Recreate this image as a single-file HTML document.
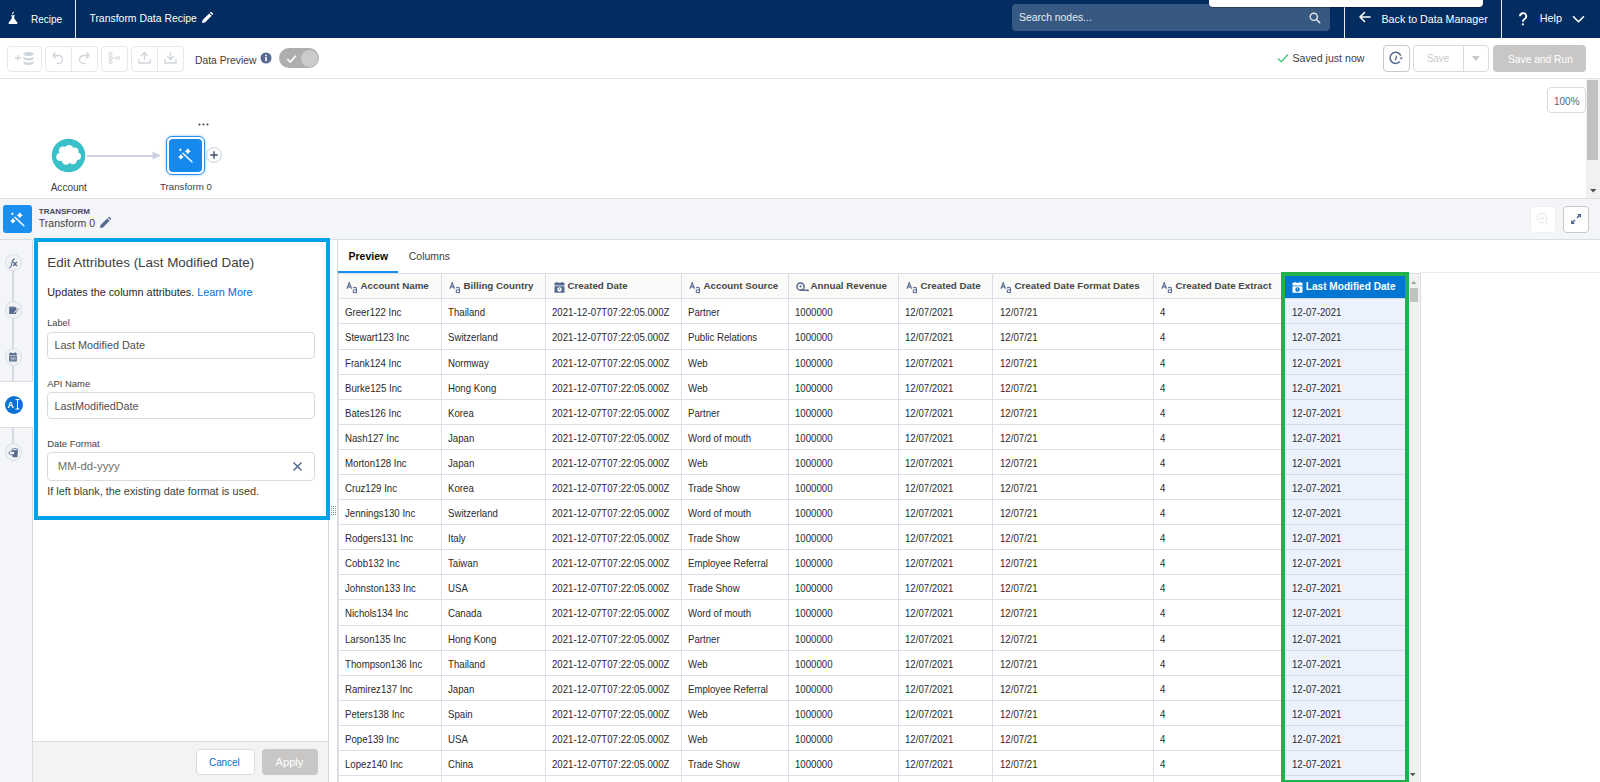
<!DOCTYPE html>
<html><head><meta charset="utf-8"><style>
html,body{margin:0;padding:0;width:1600px;height:782px;overflow:hidden;background:#fff;position:relative}
.t{position:absolute;line-height:1;white-space:pre;font-family:"Liberation Sans", sans-serif}
.b{position:absolute;box-sizing:border-box}
svg.b{overflow:visible}
</style></head><body>
<div class="b" style="left:0px;top:0px;width:1600px;height:38px;background:#032d60"></div>
<svg class="b" style="left:8px;top:11px;" width="10" height="13" viewBox="0 0 10 13"><path d="M3.2 4.2h3.6v0.9h-0.5v2.3l3.1 4.3c0.4 0.6 0 1.2-0.7 1.2H1.3c-0.7 0-1.1-0.6-0.7-1.2l3.1-4.3V5.1h-0.5z" fill="#fff"/><path d="M4.3 2.8l1.8-2.2" stroke="#fff" stroke-width="0.7"/><rect x="4" y="1.8" width="1.3" height="1.3" fill="#fff"/></svg>
<div class="t" style="left:30.5px;top:13.63px;font-size:10.6px;color:#fff;font-weight:400;transform:scaleX(0.9450);transform-origin:0 0;">Recipe</div>
<div class="b" style="left:75px;top:0px;width:1px;height:38px;background:#e8ecf2"></div>
<div class="t" style="left:89.4px;top:13.65px;font-size:10.45px;color:#fff;font-weight:400;">Transform Data Recipe</div>
<svg class="b" style="left:201px;top:12px;" width="12" height="12" viewBox="0 0 12 12"><path d="M1 11l0.6-3 6.6-6.6 2.4 2.4-6.6 6.6z" fill="#fff"/><path d="M8.9 0.7l0.6-0.6c0.3-0.3 0.7-0.3 1 0l1.4 1.4c0.3 0.3 0.3 0.7 0 1l-0.6 0.6z" fill="#fff"/></svg>
<div class="b" style="left:1012px;top:4px;width:318px;height:27px;background:#375881;border-radius:4px"></div>
<div class="t" style="left:1019px;top:13.00px;font-size:10.4px;color:#e8edf4;font-weight:400;">Search nodes...</div>
<svg class="b" style="left:1308.5px;top:11.5px;" width="12" height="12" viewBox="0 0 12 12"><circle cx="4.8" cy="4.8" r="3.6" fill="none" stroke="#e6e6e6" stroke-width="1.4"/><path d="M7.5 7.5l3.2 3.2" stroke="#e6e6e6" stroke-width="1.6" stroke-linecap="round"/></svg>
<div class="b" style="left:1344px;top:0px;width:1px;height:38px;background:#e8ecf2"></div>
<svg class="b" style="left:1358px;top:11px;" width="13" height="12" viewBox="0 0 13 12"><path d="M12 6H2M6.5 1.5L2 6l4.5 4.5" fill="none" stroke="#fff" stroke-width="1.6" stroke-linecap="round" stroke-linejoin="round"/></svg>
<div class="t" style="left:1381.5px;top:14.16px;font-size:10.68px;color:#fff;font-weight:400;">Back to Data Manager</div>
<div class="b" style="left:1209px;top:-4px;width:274px;height:11px;background:#fff;border-radius:0 0 4px 4px;box-shadow:0 1px 1px rgba(0,0,0,0.3)"></div>
<div class="b" style="left:1501px;top:0px;width:1px;height:38px;background:#e8ecf2"></div>
<svg class="b" style="left:1518px;top:12px;" width="10" height="14" viewBox="0 0 10 14"><path d="M2 4.3a3.1 3.1 0 1 1 4.6 2.7c-1.3 0.8-1.7 1.4-1.7 2.8" fill="none" stroke="#fff" stroke-width="1.9"/><circle cx="4.9" cy="12.3" r="1.15" fill="#fff"/></svg>
<div class="t" style="left:1539.8px;top:12.66px;font-size:10.8px;color:#fff;font-weight:400;">Help</div>
<svg class="b" style="left:1572px;top:15px;" width="13" height="9" viewBox="0 0 13 9"><path d="M1.5 1.8l5 5 5-5" fill="none" stroke="#fff" stroke-width="1.6" stroke-linecap="round" stroke-linejoin="round"/></svg>
<div class="b" style="left:0px;top:78px;width:1600px;height:1px;background:#e5e5e5"></div>
<div class="b" style="left:7px;top:45.5px;width:35px;height:26px;border:1px solid #e8e8e8;border-radius:4px;box-sizing:border-box;background:#fff"></div>
<svg class="b" style="left:14px;top:51px;" width="22" height="14" viewBox="0 0 22 14"><path d="M1 7h6M4 4v6" stroke="#cfd3da" stroke-width="1.3"/><ellipse cx="14.5" cy="3" rx="5" ry="2" fill="#cfd3da"/><path d="M9.5 5.2c0 1.1 2.2 2 5 2s5-0.9 5-2v2.3c0 1.1-2.2 2-5 2s-5-0.9-5-2z" fill="#cfd3da"/><path d="M9.5 9.7c0 1.1 2.2 2 5 2s5-0.9 5-2V12c0 1.1-2.2 2-5 2s-5-0.9-5-2z" fill="#cfd3da"/></svg>
<div class="b" style="left:45px;top:45.5px;width:53px;height:26px;border:1px solid #e8e8e8;border-radius:4px;box-sizing:border-box;background:#fff"></div>
<div class="b" style="left:71px;top:45.5px;width:1px;height:26px;background:#e8e8e8"></div>
<svg class="b" style="left:52px;top:51px;" width="12" height="13" viewBox="0 0 12 13"><path d="M3.5 1.5L1 4.5l3 2.8" fill="none" stroke="#cfd3da" stroke-width="1.3" stroke-linejoin="round"/><path d="M1.5 4.5h5a4 4 0 0 1 0 8h-2" fill="none" stroke="#cfd3da" stroke-width="1.3"/></svg>
<svg class="b" style="left:78px;top:51px;" width="12" height="13" viewBox="0 0 12 13"><path d="M8.5 1.5L11 4.5l-3 2.8" fill="none" stroke="#cfd3da" stroke-width="1.3" stroke-linejoin="round"/><path d="M10.5 4.5h-5a4 4 0 0 0 0 8h2" fill="none" stroke="#cfd3da" stroke-width="1.3"/></svg>
<div class="b" style="left:101px;top:45.5px;width:27px;height:26px;border:1px solid #e8e8e8;border-radius:4px;box-sizing:border-box;background:#fff"></div>
<svg class="b" style="left:108px;top:52px;" width="13" height="12" viewBox="0 0 13 12"><rect x="1" y="0.5" width="3" height="2.6" rx="0.8" fill="none" stroke="#cfd3da" stroke-width="1"/><rect x="1" y="4.7" width="3" height="2.6" rx="0.8" fill="none" stroke="#cfd3da" stroke-width="1"/><rect x="1" y="8.9" width="3" height="2.6" rx="0.8" fill="none" stroke="#cfd3da" stroke-width="1"/><path d="M4 6h4.5" stroke="#cfd3da" stroke-width="1"/><rect x="8.5" y="4.7" width="3" height="2.6" rx="0.8" fill="none" stroke="#cfd3da" stroke-width="1"/></svg>
<div class="b" style="left:131px;top:45.5px;width:53px;height:26px;border:1px solid #e8e8e8;border-radius:4px;box-sizing:border-box;background:#fff"></div>
<div class="b" style="left:157px;top:45.5px;width:1px;height:26px;background:#e8e8e8"></div>
<svg class="b" style="left:138px;top:51px;" width="13" height="13" viewBox="0 0 13 13"><path d="M6.5 9V1.5M3 5l3.5-3.5L10 5" fill="none" stroke="#cfd3da" stroke-width="1.3"/><path d="M1 8v4h11V8" fill="none" stroke="#cfd3da" stroke-width="1.3"/></svg>
<svg class="b" style="left:164px;top:51px;" width="13" height="13" viewBox="0 0 13 13"><path d="M6.5 1v7.5M3 5l3.5 3.5L10 5" fill="none" stroke="#cfd3da" stroke-width="1.3"/><path d="M1 8v4h11V8" fill="none" stroke="#cfd3da" stroke-width="1.3"/></svg>
<div class="t" style="left:194.75px;top:54.63px;font-size:10.6px;color:#3e3e3c;font-weight:400;transform:scaleX(0.9750);transform-origin:0 0;">Data Preview</div>
<svg class="b" style="left:260px;top:52px;" width="12" height="12" viewBox="0 0 12 12"><circle cx="6" cy="6" r="5.5" fill="#54698d"/><rect x="5.2" y="5" width="1.6" height="4.2" fill="#fff"/><circle cx="6" cy="3.4" r="0.9" fill="#fff"/></svg>
<div class="b" style="left:279px;top:48px;width:40px;height:20px;background:#aeaeae;border-radius:10px"></div>
<div class="b" style="left:301px;top:50.3px;width:17px;height:17px;background:#cbcbcb;border-radius:50%"></div>
<svg class="b" style="left:285.5px;top:53.5px;" width="11" height="10" viewBox="0 0 11 10"><path d="M1.3 5l3 3 5.6-6.2" fill="none" stroke="#fff" stroke-width="1.7"/></svg>
<svg class="b" style="left:1277px;top:53px;" width="12" height="10" viewBox="0 0 12 10"><path d="M1 5.5l3.2 3.2L11 1.5" fill="none" stroke="#4bca81" stroke-width="1.5"/></svg>
<div class="t" style="left:1292.5px;top:53.01px;font-size:10.62px;color:#3e3e3c;font-weight:400;">Saved just now</div>
<div class="b" style="left:1383px;top:45px;width:27px;height:27px;border:1px solid #c9c9c9;border-radius:4px;box-sizing:border-box;background:#fff"></div>
<svg class="b" style="left:1389px;top:51px;" width="15" height="15" viewBox="0 0 15 15"><path d="M10.9 10.6A5.6 5.6 0 1 1 11.8 4.6" fill="none" stroke="#54698d" stroke-width="1.5"/><path d="M10.6 6.5h3.2l-1.6 2.3z" fill="#54698d"/><path d="M7.6 4.6l-0.7 3.4-1 1" fill="none" stroke="#54698d" stroke-width="1.3"/></svg>
<div class="b" style="left:1413px;top:45px;width:76px;height:27px;border:1px solid #dddbda;border-radius:4px;box-sizing:border-box;background:#fff"></div>
<div class="b" style="left:1463px;top:45px;width:1px;height:27px;background:#dddbda"></div>
<div class="t" style="left:1427px;top:54.00px;font-size:10.4px;color:#c9c7c5;font-weight:400;transform:scaleX(0.9300);transform-origin:0 0;">Save</div>
<svg class="b" style="left:1472px;top:56px;" width="8" height="5" viewBox="0 0 8 5"><path d="M0 0h7.8L3.9 4.9z" fill="#c9c7c5"/></svg>
<div class="b" style="left:1493px;top:45px;width:93px;height:27px;background:#c9c7c5;border-radius:4px"></div>
<div class="t" style="left:1507.7px;top:54.13px;font-size:10.6px;color:#fff;font-weight:400;transform:scaleX(0.9660);transform-origin:0 0;">Save and Run</div>
<div class="b" style="left:1586px;top:79px;width:14px;height:119px;background:#f1f1f1"></div>
<div class="b" style="left:1587px;top:80px;width:11px;height:80px;background:#c1c1c1"></div>
<svg class="b" style="left:1590px;top:188.5px;" width="7" height="4" viewBox="0 0 7 4"><path d="M0 0h6.4L3.2 3.6z" fill="#505050"/></svg>
<div class="b" style="left:1547px;top:87px;width:39px;height:26px;border:1px solid #dddbda;border-radius:4px;box-sizing:border-box;background:#fff"></div>
<div class="t" style="left:1553.8px;top:97.28px;font-size:10.3px;color:#5f5f5f;font-weight:400;transform:scaleX(0.9700);transform-origin:0 0;">100%</div>
<svg class="b" style="left:51px;top:138px;" width="35" height="35" viewBox="0 0 35 35"><circle cx="17.5" cy="17.5" r="16.8" fill="#3ac0c8"/><g fill="#fff"><circle cx="12" cy="12.8" r="4.2"/><circle cx="18" cy="11.3" r="4.3"/><circle cx="23.6" cy="13.3" r="3.9"/><circle cx="26.2" cy="18.2" r="3.8"/><circle cx="21.8" cy="22" r="4.2"/><circle cx="15" cy="22.5" r="4.2"/><circle cx="9.3" cy="19" r="4"/><circle cx="17.5" cy="17" r="6"/></g></svg>
<div class="b" style="left:87px;top:154.5px;width:67px;height:2px;background:#ccd3df"></div>
<svg class="b" style="left:152px;top:151px;" width="10" height="9" viewBox="0 0 10 9"><path d="M0.5 0.5L9 4.5 0.5 8.5z" fill="#ccd3df"/></svg>
<div class="b" style="left:165.5px;top:135.5px;width:39.5px;height:39.5px;border:1.6px solid #2b8ff0;border-radius:6px;box-sizing:border-box;background:#fff;box-shadow:0 0 3px rgba(27,142,239,0.55)"></div>
<div class="b" style="left:168.8px;top:138.8px;width:33px;height:33px;background:#1589ee;border-radius:4px"></div>
<svg class="b" style="left:177.8px;top:148px;" width="15" height="15" viewBox="0 0 15 15"><path d="M9.8 0.20000000000000018L11.0 2.0L12.8 3.2L11.0 4.4L9.8 6.2L8.600000000000001 4.4L6.800000000000001 3.2L8.600000000000001 2.0z" fill="#fff"/><path d="M2.9 6.1000000000000005L4.02 7.78L5.699999999999999 8.9L4.02 10.02L2.9 11.7L1.78 10.02L0.10000000000000009 8.9L1.78 7.78z" fill="#fff"/><path d="M2.3 0.19999999999999996L2.94 1.16L3.9 1.8L2.94 2.4400000000000004L2.3 3.4000000000000004L1.6599999999999997 2.4400000000000004L0.6999999999999997 1.8L1.6599999999999997 1.16z" fill="#fff"/><path d="M4.9 5.3l9 8.4" stroke="#fff" stroke-width="1.5" stroke-linecap="round"/></svg>
<svg class="b" style="left:206px;top:147px;" width="16" height="16" viewBox="0 0 16 16"><circle cx="8" cy="8" r="7.4" fill="#fff" stroke="#c9d1de" stroke-width="1"/><path d="M8 4.3v7.4M4.3 8h7.4" stroke="#3d4f6e" stroke-width="1.4"/></svg>
<svg class="b" style="left:198px;top:123px;" width="12" height="3" viewBox="0 0 12 3"><circle cx="1.5" cy="1.5" r="1" fill="#3e3e3c"/><circle cx="5.5" cy="1.5" r="1" fill="#3e3e3c"/><circle cx="9.5" cy="1.5" r="1" fill="#3e3e3c"/></svg>
<div class="t" style="left:50.7px;top:183.32px;font-size:10.02px;color:#3e3e3c;font-weight:400;">Account</div>
<div class="t" style="left:160px;top:182.12px;font-size:9.9px;color:#3e3e3c;font-weight:400;transform:scaleX(0.9800);transform-origin:0 0;">Transform 0</div>
<div class="b" style="left:0px;top:198px;width:1600px;height:42px;background:#f3f5f9;border-top:1px solid #d8dde6;border-bottom:1px solid #d8dde6;box-sizing:border-box"></div>
<div class="b" style="left:3px;top:205px;width:29px;height:28px;background:#1b8ff0;border-radius:3px"></div>
<svg class="b" style="left:10px;top:212px;" width="15" height="15" viewBox="0 0 15 15"><path d="M9.8 0.20000000000000018L11.0 2.0L12.8 3.2L11.0 4.4L9.8 6.2L8.600000000000001 4.4L6.800000000000001 3.2L8.600000000000001 2.0z" fill="#fff"/><path d="M2.9 6.1000000000000005L4.02 7.78L5.699999999999999 8.9L4.02 10.02L2.9 11.7L1.78 10.02L0.10000000000000009 8.9L1.78 7.78z" fill="#fff"/><path d="M2.3 0.19999999999999996L2.94 1.16L3.9 1.8L2.94 2.4400000000000004L2.3 3.4000000000000004L1.6599999999999997 2.4400000000000004L0.6999999999999997 1.8L1.6599999999999997 1.16z" fill="#fff"/><path d="M4.9 5.3l9 8.4" stroke="#fff" stroke-width="1.5" stroke-linecap="round"/></svg>
<div class="t" style="left:38.8px;top:208.03px;font-size:8.0px;color:#4b4b4b;font-weight:700;">TRANSFORM</div>
<div class="t" style="left:38.8px;top:218.01px;font-size:10.5px;color:#3e3e3c;font-weight:400;">Transform 0</div>
<svg class="b" style="left:99px;top:217px;" width="12" height="12" viewBox="0 0 12 12"><path d="M1 11l0.6-3 6.6-6.6 2.4 2.4-6.6 6.6z" fill="#54698d"/><path d="M8.9 0.7l0.6-0.6c0.3-0.3 0.7-0.3 1 0l1.4 1.4c0.3 0.3 0.3 0.7 0 1l-0.6 0.6z" fill="#54698d"/></svg>
<div class="b" style="left:1530px;top:206px;width:26px;height:26.5px;border:1px solid #f0f0f0;border-radius:4px;box-sizing:border-box;background:#fff"></div>
<svg class="b" style="left:1536px;top:212px;" width="14" height="14" viewBox="0 0 14 14"><circle cx="6" cy="6" r="4.8" fill="none" stroke="#e4e4e4" stroke-width="1"/><path d="M9.5 9.5l3 3" stroke="#e4e4e4" stroke-width="1"/><path d="M4.5 5v2.5M6 3.8v4.5M7.5 5v2.5" stroke="#e4e4e4" stroke-width="0.8"/></svg>
<div class="b" style="left:1563px;top:206px;width:26px;height:26.5px;border:1px solid #c9c9c9;border-radius:4px;box-sizing:border-box;background:#fff"></div>
<svg class="b" style="left:1570px;top:213px;" width="12" height="12" viewBox="0 0 12 12"><path d="M7 1h4v4z" fill="#54698d"/><path d="M10 2L7 5" stroke="#54698d" stroke-width="1.6"/><path d="M5 11H1V7z" fill="#54698d"/><path d="M2 10l3-3" stroke="#54698d" stroke-width="1.6"/></svg>
<div class="b" style="left:0px;top:240px;width:33px;height:542px;background:#f3f5f9;border-right:1px solid #dddbda;box-sizing:border-box"></div>
<div class="b" style="left:0px;top:381px;width:33px;height:47px;background:#fff;border-top:1px solid #dddbda;border-bottom:1px solid #dddbda;box-sizing:border-box"></div>
<div class="b" style="left:12px;top:271px;width:2px;height:31px;background:#d3dae4"></div>
<div class="b" style="left:12px;top:318px;width:2px;height:31px;background:#d3dae4"></div>
<div class="b" style="left:12px;top:365px;width:2px;height:16px;background:#d3dae4"></div>
<div class="b" style="left:12px;top:428px;width:2px;height:16px;background:#d3dae4"></div>
<div class="b" style="left:4.6px;top:254.29999999999998px;width:17.2px;height:17.2px;border:1px solid #d8dde6;border-radius:50%;box-sizing:border-box;background:#f0f2f6"></div>
<div class="b" style="left:4.6px;top:301.4px;width:17.2px;height:17.2px;border:1px solid #d8dde6;border-radius:50%;box-sizing:border-box;background:#f0f2f6"></div>
<div class="b" style="left:4.6px;top:348.4px;width:17.2px;height:17.2px;border:1px solid #d8dde6;border-radius:50%;box-sizing:border-box;background:#f0f2f6"></div>
<div class="b" style="left:4.6px;top:443.4px;width:17.2px;height:17.2px;border:1px solid #d8dde6;border-radius:50%;box-sizing:border-box;background:#f0f2f6"></div>
<svg class="b" style="left:4px;top:254px;" width="18" height="18" viewBox="0 0 18 18"><path d="M5.2 13.6c1.3 0.2 1.9-0.6 2.3-2.6l0.9-3.6c0.4-1.7 1-2.5 2.4-2.3" fill="none" stroke="#54698d" stroke-width="1.1"/><path d="M9.3 7.8l3.6 4.2M12.9 7.8l-3.6 4.2" stroke="#54698d" stroke-width="1.3"/></svg>
<svg class="b" style="left:9px;top:306px;" width="10" height="9" viewBox="0 0 10 9"><rect x="0.2" y="1.2" width="7" height="6.8" fill="#54698d"/><path d="M1 0.2v1.4M2.8 0.2v1.4M4.6 0.2v1.4" stroke="#54698d" stroke-width="0.8"/><path d="M4.3 7.6l0.5-1.6 3.6-3.6 1 1-3.6 3.6z" fill="#f0f2f6" stroke="#54698d" stroke-width="0.7"/></svg>
<svg class="b" style="left:9px;top:352px;" width="9" height="10" viewBox="0 0 9 10"><rect x="0.2" y="1.2" width="7.6" height="2.2" fill="#54698d"/><rect x="0.2" y="4" width="7.6" height="5.5" fill="#54698d"/><path d="M1.8 0.2v1.5M6.2 0.2v1.5" stroke="#54698d" stroke-width="0.9"/><path d="M1.6 5.2h1.6v3M1.6 6.6h1.5M1.6 8.2h1.6M4.6 5.2v3.2M4.6 5.2h1.6v3.2" fill="none" stroke="#f0f2f6" stroke-width="0.6"/></svg>
<div class="b" style="left:4.5px;top:395.5px;width:18px;height:18px;background:#0b72d4;border-radius:50%"></div>
<div class="t" style="left:7.6px;top:400.60px;font-size:8.5px;color:#fff;font-weight:700;">A</div>
<svg class="b" style="left:15px;top:399px;" width="5" height="11" viewBox="0 0 5 11"><path d="M0.5 0.5h4M0.5 10h4M2.5 0.5v9.5" stroke="#fff" stroke-width="1"/></svg>
<svg class="b" style="left:8px;top:447.5px;" width="11" height="10" viewBox="0 0 11 10"><path d="M4 1.6h6l-0.6 7.6h-4.8z" fill="#54698d"/><ellipse cx="7" cy="1.6" rx="3" ry="1.1" fill="#f0f2f6" stroke="#54698d" stroke-width="0.8"/><path d="M0.6 5l2-1.7h4v3.4h-4z" fill="#f0f2f6" stroke="#54698d" stroke-width="0.9"/></svg>
<div class="b" style="left:33px;top:240px;width:296px;height:542px;background:#fff;border-right:1px solid #dddbda;box-sizing:border-box"></div>
<div class="b" style="left:33px;top:741px;width:296px;height:41px;background:#f3f3f3;border-top:1px solid #dddbda;box-sizing:border-box;border-right:1px solid #dddbda"></div>
<div class="b" style="left:196px;top:749px;width:59px;height:26px;background:#fff;border:1px solid #dddbda;border-radius:4px;box-sizing:border-box"></div>
<div class="t" style="left:209px;top:757.41px;font-size:10.5px;color:#0070d2;font-weight:400;transform:scaleX(0.9400);transform-origin:0 0;">Cancel</div>
<div class="b" style="left:262px;top:749px;width:56px;height:26px;background:#c9c7c5;border-radius:4px"></div>
<div class="t" style="left:275.5px;top:756.56px;font-size:11.15px;color:#fff;font-weight:400;">Apply</div>
<div class="t" style="left:47.3px;top:255.86px;font-size:13.4px;color:#3e3e3c;font-weight:400;">Edit Attributes (Last Modified Date)</div>
<div class="t" style="left:47.3px;top:286.52px;font-size:10.84px;color:#2b2826;font-weight:400;">Updates the column attributes. <span style="color:#0070d2">Learn More</span></div>
<div class="t" style="left:47.2px;top:319.01px;font-size:9.2px;color:#3e3e3c;font-weight:400;">Label</div>
<div class="b" style="left:47px;top:332px;width:268px;height:27px;border:1px solid #dddbda;border-radius:4px;box-sizing:border-box;background:#fff"></div>
<div class="t" style="left:54.4px;top:340.20px;font-size:10.87px;color:#505050;font-weight:400;">Last Modified Date</div>
<div class="t" style="left:47.2px;top:379.20px;font-size:9.45px;color:#3e3e3c;font-weight:400;">API Name</div>
<div class="b" style="left:47px;top:392px;width:268px;height:27px;border:1px solid #dddbda;border-radius:4px;box-sizing:border-box;background:#fff"></div>
<div class="t" style="left:54.6px;top:400.85px;font-size:10.81px;color:#505050;font-weight:400;">LastModifiedDate</div>
<div class="t" style="left:47.2px;top:439.40px;font-size:9.45px;color:#3e3e3c;font-weight:400;">Date Format</div>
<div class="b" style="left:47px;top:452px;width:268px;height:29px;border:1px solid #dddbda;border-radius:4px;box-sizing:border-box;background:#fff"></div>
<div class="t" style="left:57.8px;top:461.36px;font-size:11.39px;color:#706e6b;font-weight:400;">MM-dd-yyyy</div>
<svg class="b" style="left:292px;top:461px;" width="11" height="11" viewBox="0 0 11 11"><path d="M1.5 1.5l8 8M9.5 1.5l-8 8" stroke="#54698d" stroke-width="1.5"/></svg>
<div class="t" style="left:47.2px;top:485.60px;font-size:10.87px;color:#3e3e3c;font-weight:400;">If left blank, the existing date format is used.</div>
<div class="b" style="left:34px;top:238px;width:296px;height:282px;border:4px solid #00a2e8;box-sizing:border-box"></div>
<svg class="b" style="left:331px;top:506px;" width="5" height="10" viewBox="0 0 5 10"><rect x="0" y="0" width="1" height="1" fill="#8a8a8a"/><rect x="0" y="2" width="1" height="1" fill="#8a8a8a"/><rect x="0" y="4" width="1" height="1" fill="#8a8a8a"/><rect x="0" y="6" width="1" height="1" fill="#8a8a8a"/><rect x="0" y="8" width="1" height="1" fill="#8a8a8a"/><rect x="2" y="0" width="1" height="1" fill="#8a8a8a"/><rect x="2" y="2" width="1" height="1" fill="#8a8a8a"/><rect x="2" y="4" width="1" height="1" fill="#8a8a8a"/><rect x="2" y="6" width="1" height="1" fill="#8a8a8a"/><rect x="2" y="8" width="1" height="1" fill="#8a8a8a"/><rect x="4" y="0" width="1" height="1" fill="#8a8a8a"/><rect x="4" y="2" width="1" height="1" fill="#8a8a8a"/><rect x="4" y="4" width="1" height="1" fill="#8a8a8a"/><rect x="4" y="6" width="1" height="1" fill="#8a8a8a"/><rect x="4" y="8" width="1" height="1" fill="#8a8a8a"/></svg>
<div class="b" style="left:337px;top:240px;width:1px;height:542px;background:#dddbda"></div>
<div class="b" style="left:1420px;top:272px;width:180px;height:1px;background:#ebebeb"></div>
<div class="t" style="left:348.6px;top:251.85px;font-size:10.45px;color:#080707;font-weight:700;">Preview</div>
<div class="t" style="left:408.8px;top:251.86px;font-size:10.44px;color:#3e3e3c;font-weight:400;">Columns</div>
<div class="b" style="left:338px;top:271px;width:60px;height:2.5px;background:#1b8ff0"></div>
<div class="b" style="left:338px;top:273px;width:1071px;height:25px;background:#fafaf9"></div>
<div class="b" style="left:338px;top:273px;width:1071px;height:1px;background:#dadfe9"></div>
<div class="b" style="left:338px;top:298px;width:1071px;height:1px;background:#dadfe9"></div>
<div class="b" style="left:338px;top:323px;width:1071px;height:1px;background:#dadfe9"></div>
<div class="b" style="left:338px;top:349px;width:1071px;height:1px;background:#dadfe9"></div>
<div class="b" style="left:338px;top:374px;width:1071px;height:1px;background:#dadfe9"></div>
<div class="b" style="left:338px;top:399px;width:1071px;height:1px;background:#dadfe9"></div>
<div class="b" style="left:338px;top:424px;width:1071px;height:1px;background:#dadfe9"></div>
<div class="b" style="left:338px;top:449px;width:1071px;height:1px;background:#dadfe9"></div>
<div class="b" style="left:338px;top:474px;width:1071px;height:1px;background:#dadfe9"></div>
<div class="b" style="left:338px;top:499px;width:1071px;height:1px;background:#dadfe9"></div>
<div class="b" style="left:338px;top:524px;width:1071px;height:1px;background:#dadfe9"></div>
<div class="b" style="left:338px;top:549px;width:1071px;height:1px;background:#dadfe9"></div>
<div class="b" style="left:338px;top:574px;width:1071px;height:1px;background:#dadfe9"></div>
<div class="b" style="left:338px;top:599px;width:1071px;height:1px;background:#dadfe9"></div>
<div class="b" style="left:338px;top:625px;width:1071px;height:1px;background:#dadfe9"></div>
<div class="b" style="left:338px;top:650px;width:1071px;height:1px;background:#dadfe9"></div>
<div class="b" style="left:338px;top:675px;width:1071px;height:1px;background:#dadfe9"></div>
<div class="b" style="left:338px;top:700px;width:1071px;height:1px;background:#dadfe9"></div>
<div class="b" style="left:338px;top:725px;width:1071px;height:1px;background:#dadfe9"></div>
<div class="b" style="left:338px;top:750px;width:1071px;height:1px;background:#dadfe9"></div>
<div class="b" style="left:338px;top:775px;width:1071px;height:1px;background:#dadfe9"></div>
<div class="b" style="left:338px;top:273px;width:1px;height:509px;background:#dadfe9"></div>
<div class="b" style="left:441px;top:273px;width:1px;height:509px;background:#dadfe9"></div>
<div class="b" style="left:545px;top:273px;width:1px;height:509px;background:#dadfe9"></div>
<div class="b" style="left:681px;top:273px;width:1px;height:509px;background:#dadfe9"></div>
<div class="b" style="left:788px;top:273px;width:1px;height:509px;background:#dadfe9"></div>
<div class="b" style="left:898px;top:273px;width:1px;height:509px;background:#dadfe9"></div>
<div class="b" style="left:992px;top:273px;width:1px;height:509px;background:#dadfe9"></div>
<div class="b" style="left:1153px;top:273px;width:1px;height:509px;background:#dadfe9"></div>
<div class="b" style="left:1281px;top:273px;width:1px;height:509px;background:#dadfe9"></div>
<div class="b" style="left:1282px;top:298px;width:127px;height:484px;background:#ecf2fd"></div>
<div class="b" style="left:1282px;top:298px;width:127px;height:1px;background:#d3dbe8"></div>
<div class="b" style="left:1282px;top:323px;width:127px;height:1px;background:#d3dbe8"></div>
<div class="b" style="left:1282px;top:349px;width:127px;height:1px;background:#d3dbe8"></div>
<div class="b" style="left:1282px;top:374px;width:127px;height:1px;background:#d3dbe8"></div>
<div class="b" style="left:1282px;top:399px;width:127px;height:1px;background:#d3dbe8"></div>
<div class="b" style="left:1282px;top:424px;width:127px;height:1px;background:#d3dbe8"></div>
<div class="b" style="left:1282px;top:449px;width:127px;height:1px;background:#d3dbe8"></div>
<div class="b" style="left:1282px;top:474px;width:127px;height:1px;background:#d3dbe8"></div>
<div class="b" style="left:1282px;top:499px;width:127px;height:1px;background:#d3dbe8"></div>
<div class="b" style="left:1282px;top:524px;width:127px;height:1px;background:#d3dbe8"></div>
<div class="b" style="left:1282px;top:549px;width:127px;height:1px;background:#d3dbe8"></div>
<div class="b" style="left:1282px;top:574px;width:127px;height:1px;background:#d3dbe8"></div>
<div class="b" style="left:1282px;top:599px;width:127px;height:1px;background:#d3dbe8"></div>
<div class="b" style="left:1282px;top:625px;width:127px;height:1px;background:#d3dbe8"></div>
<div class="b" style="left:1282px;top:650px;width:127px;height:1px;background:#d3dbe8"></div>
<div class="b" style="left:1282px;top:675px;width:127px;height:1px;background:#d3dbe8"></div>
<div class="b" style="left:1282px;top:700px;width:127px;height:1px;background:#d3dbe8"></div>
<div class="b" style="left:1282px;top:725px;width:127px;height:1px;background:#d3dbe8"></div>
<div class="b" style="left:1282px;top:750px;width:127px;height:1px;background:#d3dbe8"></div>
<div class="b" style="left:1282px;top:775px;width:127px;height:1px;background:#d3dbe8"></div>
<div class="b" style="left:1282px;top:273px;width:127px;height:25px;background:#0176d3"></div>
<svg class="b" style="left:345.5px;top:281px;" width="12" height="13" viewBox="0 0 12 13"><path d="M0.9 7.8L3.2 1.9L5.5 7.8M1.7 5.8H4.7" fill="none" stroke="#54698d" stroke-width="1.15"/><path d="M7.1 7.2c0.4-0.6 1-0.9 1.7-0.9 1 0 1.7 0.6 1.7 1.6v3.9M10.5 9.1c-0.4-0.3-0.9-0.4-1.5-0.4-1.1 0-1.9 0.6-1.9 1.5 0 0.9 0.7 1.5 1.7 1.5 0.8 0 1.4-0.4 1.7-1" fill="none" stroke="#54698d" stroke-width="1.1"/></svg>
<div class="t" style="left:360.5px;top:281.35px;font-size:9.75px;color:#484846;font-weight:700;">Account Name</div>
<svg class="b" style="left:448.5px;top:281px;" width="12" height="13" viewBox="0 0 12 13"><path d="M0.9 7.8L3.2 1.9L5.5 7.8M1.7 5.8H4.7" fill="none" stroke="#54698d" stroke-width="1.15"/><path d="M7.1 7.2c0.4-0.6 1-0.9 1.7-0.9 1 0 1.7 0.6 1.7 1.6v3.9M10.5 9.1c-0.4-0.3-0.9-0.4-1.5-0.4-1.1 0-1.9 0.6-1.9 1.5 0 0.9 0.7 1.5 1.7 1.5 0.8 0 1.4-0.4 1.7-1" fill="none" stroke="#54698d" stroke-width="1.1"/></svg>
<div class="t" style="left:463.5px;top:281.35px;font-size:9.75px;color:#484846;font-weight:700;">Billing Country</div>
<svg class="b" style="left:554px;top:282px;" width="11" height="11" viewBox="0 0 11 11"><rect x="0.5" y="0.8" width="10" height="2.6" rx="0.5" fill="#54698d"/><rect x="2.2" y="0" width="1.4" height="1.5" fill="#54698d"/><rect x="7.2" y="0" width="1.4" height="1.5" fill="#54698d"/><rect x="0.5" y="4.2" width="10" height="6.6" rx="0.5" fill="#54698d"/><circle cx="5.5" cy="7.5" r="2.2" fill="#fafaf9"/><path d="M5.5 6.3v1.6" stroke="#54698d" stroke-width="0.7"/></svg>
<div class="t" style="left:567.5px;top:281.35px;font-size:9.75px;color:#484846;font-weight:700;">Created Date</div>
<svg class="b" style="left:688.5px;top:281px;" width="12" height="13" viewBox="0 0 12 13"><path d="M0.9 7.8L3.2 1.9L5.5 7.8M1.7 5.8H4.7" fill="none" stroke="#54698d" stroke-width="1.15"/><path d="M7.1 7.2c0.4-0.6 1-0.9 1.7-0.9 1 0 1.7 0.6 1.7 1.6v3.9M10.5 9.1c-0.4-0.3-0.9-0.4-1.5-0.4-1.1 0-1.9 0.6-1.9 1.5 0 0.9 0.7 1.5 1.7 1.5 0.8 0 1.4-0.4 1.7-1" fill="none" stroke="#54698d" stroke-width="1.1"/></svg>
<div class="t" style="left:703.5px;top:281.35px;font-size:9.75px;color:#484846;font-weight:700;">Account Source</div>
<svg class="b" style="left:795.5px;top:282px;" width="13" height="10" viewBox="0 0 13 10"><circle cx="4.5" cy="4.5" r="3.6" fill="none" stroke="#54698d" stroke-width="1.5"/><circle cx="4.5" cy="4.3" r="1.1" fill="#54698d"/><path d="M4.5 8.2h7.5v1" fill="none" stroke="#54698d" stroke-width="1.5"/></svg>
<div class="t" style="left:810.5px;top:281.35px;font-size:9.75px;color:#484846;font-weight:700;">Annual Revenue</div>
<svg class="b" style="left:905.5px;top:281px;" width="12" height="13" viewBox="0 0 12 13"><path d="M0.9 7.8L3.2 1.9L5.5 7.8M1.7 5.8H4.7" fill="none" stroke="#54698d" stroke-width="1.15"/><path d="M7.1 7.2c0.4-0.6 1-0.9 1.7-0.9 1 0 1.7 0.6 1.7 1.6v3.9M10.5 9.1c-0.4-0.3-0.9-0.4-1.5-0.4-1.1 0-1.9 0.6-1.9 1.5 0 0.9 0.7 1.5 1.7 1.5 0.8 0 1.4-0.4 1.7-1" fill="none" stroke="#54698d" stroke-width="1.1"/></svg>
<div class="t" style="left:920.5px;top:281.35px;font-size:9.75px;color:#484846;font-weight:700;">Created Date</div>
<svg class="b" style="left:999.5px;top:281px;" width="12" height="13" viewBox="0 0 12 13"><path d="M0.9 7.8L3.2 1.9L5.5 7.8M1.7 5.8H4.7" fill="none" stroke="#54698d" stroke-width="1.15"/><path d="M7.1 7.2c0.4-0.6 1-0.9 1.7-0.9 1 0 1.7 0.6 1.7 1.6v3.9M10.5 9.1c-0.4-0.3-0.9-0.4-1.5-0.4-1.1 0-1.9 0.6-1.9 1.5 0 0.9 0.7 1.5 1.7 1.5 0.8 0 1.4-0.4 1.7-1" fill="none" stroke="#54698d" stroke-width="1.1"/></svg>
<div class="t" style="left:1014.5px;top:281.35px;font-size:9.75px;color:#484846;font-weight:700;">Created Date Format Dates</div>
<svg class="b" style="left:1160.5px;top:281px;" width="12" height="13" viewBox="0 0 12 13"><path d="M0.9 7.8L3.2 1.9L5.5 7.8M1.7 5.8H4.7" fill="none" stroke="#54698d" stroke-width="1.15"/><path d="M7.1 7.2c0.4-0.6 1-0.9 1.7-0.9 1 0 1.7 0.6 1.7 1.6v3.9M10.5 9.1c-0.4-0.3-0.9-0.4-1.5-0.4-1.1 0-1.9 0.6-1.9 1.5 0 0.9 0.7 1.5 1.7 1.5 0.8 0 1.4-0.4 1.7-1" fill="none" stroke="#54698d" stroke-width="1.1"/></svg>
<div class="t" style="left:1175.5px;top:281.35px;font-size:9.75px;color:#484846;font-weight:700;">Created Date Extract</div>
<svg class="b" style="left:1292px;top:282px;" width="11" height="11" viewBox="0 0 11 11"><rect x="0.5" y="0.8" width="10" height="2.6" rx="0.5" fill="#fff"/><rect x="2.2" y="0" width="1.4" height="1.5" fill="#fff"/><rect x="7.2" y="0" width="1.4" height="1.5" fill="#fff"/><rect x="0.5" y="4.2" width="10" height="6.6" rx="0.5" fill="#fff"/><circle cx="5.5" cy="7.5" r="2.2" fill="#0176d3"/><path d="M5.5 6.3v1.6" stroke="#fff" stroke-width="0.7"/></svg>
<div class="t" style="left:1305.8px;top:282.45px;font-size:10.1px;color:#fff;font-weight:700;">Last Modified Date</div>
<div class="t" style="left:345.2px;top:306.91px;font-size:10.5px;color:#2a2a2a;font-weight:400;transform:scaleX(0.9190);transform-origin:0 0;">Greer122 Inc</div>
<div class="t" style="left:448.1px;top:306.91px;font-size:10.5px;color:#2a2a2a;font-weight:400;transform:scaleX(0.9190);transform-origin:0 0;">Thailand</div>
<div class="t" style="left:552.4px;top:306.91px;font-size:10.5px;color:#2a2a2a;font-weight:400;transform:scaleX(0.9190);transform-origin:0 0;">2021-12-07T07:22:05.000Z</div>
<div class="t" style="left:688.2px;top:306.91px;font-size:10.5px;color:#2a2a2a;font-weight:400;transform:scaleX(0.9190);transform-origin:0 0;">Partner</div>
<div class="t" style="left:795.4px;top:306.91px;font-size:10.5px;color:#2a2a2a;font-weight:400;transform:scaleX(0.9190);transform-origin:0 0;">1000000</div>
<div class="t" style="left:905.2px;top:306.91px;font-size:10.5px;color:#2a2a2a;font-weight:400;transform:scaleX(0.9190);transform-origin:0 0;">12/07/2021</div>
<div class="t" style="left:999.6px;top:306.91px;font-size:10.5px;color:#2a2a2a;font-weight:400;transform:scaleX(0.9190);transform-origin:0 0;">12/07/21</div>
<div class="t" style="left:1159.8px;top:306.91px;font-size:10.5px;color:#2a2a2a;font-weight:400;transform:scaleX(0.9190);transform-origin:0 0;">4</div>
<div class="t" style="left:1291.8px;top:306.91px;font-size:10.5px;color:#2a2a2a;font-weight:400;transform:scaleX(0.9190);transform-origin:0 0;">12-07-2021</div>
<div class="t" style="left:345.2px;top:331.91px;font-size:10.5px;color:#2a2a2a;font-weight:400;transform:scaleX(0.9190);transform-origin:0 0;">Stewart123 Inc</div>
<div class="t" style="left:448.1px;top:331.91px;font-size:10.5px;color:#2a2a2a;font-weight:400;transform:scaleX(0.9190);transform-origin:0 0;">Switzerland</div>
<div class="t" style="left:552.4px;top:331.91px;font-size:10.5px;color:#2a2a2a;font-weight:400;transform:scaleX(0.9190);transform-origin:0 0;">2021-12-07T07:22:05.000Z</div>
<div class="t" style="left:688.2px;top:331.91px;font-size:10.5px;color:#2a2a2a;font-weight:400;transform:scaleX(0.9190);transform-origin:0 0;">Public Relations</div>
<div class="t" style="left:795.4px;top:331.91px;font-size:10.5px;color:#2a2a2a;font-weight:400;transform:scaleX(0.9190);transform-origin:0 0;">1000000</div>
<div class="t" style="left:905.2px;top:331.91px;font-size:10.5px;color:#2a2a2a;font-weight:400;transform:scaleX(0.9190);transform-origin:0 0;">12/07/2021</div>
<div class="t" style="left:999.6px;top:331.91px;font-size:10.5px;color:#2a2a2a;font-weight:400;transform:scaleX(0.9190);transform-origin:0 0;">12/07/21</div>
<div class="t" style="left:1159.8px;top:331.91px;font-size:10.5px;color:#2a2a2a;font-weight:400;transform:scaleX(0.9190);transform-origin:0 0;">4</div>
<div class="t" style="left:1291.8px;top:331.91px;font-size:10.5px;color:#2a2a2a;font-weight:400;transform:scaleX(0.9190);transform-origin:0 0;">12-07-2021</div>
<div class="t" style="left:345.2px;top:357.91px;font-size:10.5px;color:#2a2a2a;font-weight:400;transform:scaleX(0.9190);transform-origin:0 0;">Frank124 Inc</div>
<div class="t" style="left:448.1px;top:357.91px;font-size:10.5px;color:#2a2a2a;font-weight:400;transform:scaleX(0.9190);transform-origin:0 0;">Normway</div>
<div class="t" style="left:552.4px;top:357.91px;font-size:10.5px;color:#2a2a2a;font-weight:400;transform:scaleX(0.9190);transform-origin:0 0;">2021-12-07T07:22:05.000Z</div>
<div class="t" style="left:688.2px;top:357.91px;font-size:10.5px;color:#2a2a2a;font-weight:400;transform:scaleX(0.9190);transform-origin:0 0;">Web</div>
<div class="t" style="left:795.4px;top:357.91px;font-size:10.5px;color:#2a2a2a;font-weight:400;transform:scaleX(0.9190);transform-origin:0 0;">1000000</div>
<div class="t" style="left:905.2px;top:357.91px;font-size:10.5px;color:#2a2a2a;font-weight:400;transform:scaleX(0.9190);transform-origin:0 0;">12/07/2021</div>
<div class="t" style="left:999.6px;top:357.91px;font-size:10.5px;color:#2a2a2a;font-weight:400;transform:scaleX(0.9190);transform-origin:0 0;">12/07/21</div>
<div class="t" style="left:1159.8px;top:357.91px;font-size:10.5px;color:#2a2a2a;font-weight:400;transform:scaleX(0.9190);transform-origin:0 0;">4</div>
<div class="t" style="left:1291.8px;top:357.91px;font-size:10.5px;color:#2a2a2a;font-weight:400;transform:scaleX(0.9190);transform-origin:0 0;">12-07-2021</div>
<div class="t" style="left:345.2px;top:382.91px;font-size:10.5px;color:#2a2a2a;font-weight:400;transform:scaleX(0.9190);transform-origin:0 0;">Burke125 Inc</div>
<div class="t" style="left:448.1px;top:382.91px;font-size:10.5px;color:#2a2a2a;font-weight:400;transform:scaleX(0.9190);transform-origin:0 0;">Hong Kong</div>
<div class="t" style="left:552.4px;top:382.91px;font-size:10.5px;color:#2a2a2a;font-weight:400;transform:scaleX(0.9190);transform-origin:0 0;">2021-12-07T07:22:05.000Z</div>
<div class="t" style="left:688.2px;top:382.91px;font-size:10.5px;color:#2a2a2a;font-weight:400;transform:scaleX(0.9190);transform-origin:0 0;">Web</div>
<div class="t" style="left:795.4px;top:382.91px;font-size:10.5px;color:#2a2a2a;font-weight:400;transform:scaleX(0.9190);transform-origin:0 0;">1000000</div>
<div class="t" style="left:905.2px;top:382.91px;font-size:10.5px;color:#2a2a2a;font-weight:400;transform:scaleX(0.9190);transform-origin:0 0;">12/07/2021</div>
<div class="t" style="left:999.6px;top:382.91px;font-size:10.5px;color:#2a2a2a;font-weight:400;transform:scaleX(0.9190);transform-origin:0 0;">12/07/21</div>
<div class="t" style="left:1159.8px;top:382.91px;font-size:10.5px;color:#2a2a2a;font-weight:400;transform:scaleX(0.9190);transform-origin:0 0;">4</div>
<div class="t" style="left:1291.8px;top:382.91px;font-size:10.5px;color:#2a2a2a;font-weight:400;transform:scaleX(0.9190);transform-origin:0 0;">12-07-2021</div>
<div class="t" style="left:345.2px;top:407.91px;font-size:10.5px;color:#2a2a2a;font-weight:400;transform:scaleX(0.9190);transform-origin:0 0;">Bates126 Inc</div>
<div class="t" style="left:448.1px;top:407.91px;font-size:10.5px;color:#2a2a2a;font-weight:400;transform:scaleX(0.9190);transform-origin:0 0;">Korea</div>
<div class="t" style="left:552.4px;top:407.91px;font-size:10.5px;color:#2a2a2a;font-weight:400;transform:scaleX(0.9190);transform-origin:0 0;">2021-12-07T07:22:05.000Z</div>
<div class="t" style="left:688.2px;top:407.91px;font-size:10.5px;color:#2a2a2a;font-weight:400;transform:scaleX(0.9190);transform-origin:0 0;">Partner</div>
<div class="t" style="left:795.4px;top:407.91px;font-size:10.5px;color:#2a2a2a;font-weight:400;transform:scaleX(0.9190);transform-origin:0 0;">1000000</div>
<div class="t" style="left:905.2px;top:407.91px;font-size:10.5px;color:#2a2a2a;font-weight:400;transform:scaleX(0.9190);transform-origin:0 0;">12/07/2021</div>
<div class="t" style="left:999.6px;top:407.91px;font-size:10.5px;color:#2a2a2a;font-weight:400;transform:scaleX(0.9190);transform-origin:0 0;">12/07/21</div>
<div class="t" style="left:1159.8px;top:407.91px;font-size:10.5px;color:#2a2a2a;font-weight:400;transform:scaleX(0.9190);transform-origin:0 0;">4</div>
<div class="t" style="left:1291.8px;top:407.91px;font-size:10.5px;color:#2a2a2a;font-weight:400;transform:scaleX(0.9190);transform-origin:0 0;">12-07-2021</div>
<div class="t" style="left:345.2px;top:432.91px;font-size:10.5px;color:#2a2a2a;font-weight:400;transform:scaleX(0.9190);transform-origin:0 0;">Nash127 Inc</div>
<div class="t" style="left:448.1px;top:432.91px;font-size:10.5px;color:#2a2a2a;font-weight:400;transform:scaleX(0.9190);transform-origin:0 0;">Japan</div>
<div class="t" style="left:552.4px;top:432.91px;font-size:10.5px;color:#2a2a2a;font-weight:400;transform:scaleX(0.9190);transform-origin:0 0;">2021-12-07T07:22:05.000Z</div>
<div class="t" style="left:688.2px;top:432.91px;font-size:10.5px;color:#2a2a2a;font-weight:400;transform:scaleX(0.9190);transform-origin:0 0;">Word of mouth</div>
<div class="t" style="left:795.4px;top:432.91px;font-size:10.5px;color:#2a2a2a;font-weight:400;transform:scaleX(0.9190);transform-origin:0 0;">1000000</div>
<div class="t" style="left:905.2px;top:432.91px;font-size:10.5px;color:#2a2a2a;font-weight:400;transform:scaleX(0.9190);transform-origin:0 0;">12/07/2021</div>
<div class="t" style="left:999.6px;top:432.91px;font-size:10.5px;color:#2a2a2a;font-weight:400;transform:scaleX(0.9190);transform-origin:0 0;">12/07/21</div>
<div class="t" style="left:1159.8px;top:432.91px;font-size:10.5px;color:#2a2a2a;font-weight:400;transform:scaleX(0.9190);transform-origin:0 0;">4</div>
<div class="t" style="left:1291.8px;top:432.91px;font-size:10.5px;color:#2a2a2a;font-weight:400;transform:scaleX(0.9190);transform-origin:0 0;">12-07-2021</div>
<div class="t" style="left:345.2px;top:457.91px;font-size:10.5px;color:#2a2a2a;font-weight:400;transform:scaleX(0.9190);transform-origin:0 0;">Morton128 Inc</div>
<div class="t" style="left:448.1px;top:457.91px;font-size:10.5px;color:#2a2a2a;font-weight:400;transform:scaleX(0.9190);transform-origin:0 0;">Japan</div>
<div class="t" style="left:552.4px;top:457.91px;font-size:10.5px;color:#2a2a2a;font-weight:400;transform:scaleX(0.9190);transform-origin:0 0;">2021-12-07T07:22:05.000Z</div>
<div class="t" style="left:688.2px;top:457.91px;font-size:10.5px;color:#2a2a2a;font-weight:400;transform:scaleX(0.9190);transform-origin:0 0;">Web</div>
<div class="t" style="left:795.4px;top:457.91px;font-size:10.5px;color:#2a2a2a;font-weight:400;transform:scaleX(0.9190);transform-origin:0 0;">1000000</div>
<div class="t" style="left:905.2px;top:457.91px;font-size:10.5px;color:#2a2a2a;font-weight:400;transform:scaleX(0.9190);transform-origin:0 0;">12/07/2021</div>
<div class="t" style="left:999.6px;top:457.91px;font-size:10.5px;color:#2a2a2a;font-weight:400;transform:scaleX(0.9190);transform-origin:0 0;">12/07/21</div>
<div class="t" style="left:1159.8px;top:457.91px;font-size:10.5px;color:#2a2a2a;font-weight:400;transform:scaleX(0.9190);transform-origin:0 0;">4</div>
<div class="t" style="left:1291.8px;top:457.91px;font-size:10.5px;color:#2a2a2a;font-weight:400;transform:scaleX(0.9190);transform-origin:0 0;">12-07-2021</div>
<div class="t" style="left:345.2px;top:482.91px;font-size:10.5px;color:#2a2a2a;font-weight:400;transform:scaleX(0.9190);transform-origin:0 0;">Cruz129 Inc</div>
<div class="t" style="left:448.1px;top:482.91px;font-size:10.5px;color:#2a2a2a;font-weight:400;transform:scaleX(0.9190);transform-origin:0 0;">Korea</div>
<div class="t" style="left:552.4px;top:482.91px;font-size:10.5px;color:#2a2a2a;font-weight:400;transform:scaleX(0.9190);transform-origin:0 0;">2021-12-07T07:22:05.000Z</div>
<div class="t" style="left:688.2px;top:482.91px;font-size:10.5px;color:#2a2a2a;font-weight:400;transform:scaleX(0.9190);transform-origin:0 0;">Trade Show</div>
<div class="t" style="left:795.4px;top:482.91px;font-size:10.5px;color:#2a2a2a;font-weight:400;transform:scaleX(0.9190);transform-origin:0 0;">1000000</div>
<div class="t" style="left:905.2px;top:482.91px;font-size:10.5px;color:#2a2a2a;font-weight:400;transform:scaleX(0.9190);transform-origin:0 0;">12/07/2021</div>
<div class="t" style="left:999.6px;top:482.91px;font-size:10.5px;color:#2a2a2a;font-weight:400;transform:scaleX(0.9190);transform-origin:0 0;">12/07/21</div>
<div class="t" style="left:1159.8px;top:482.91px;font-size:10.5px;color:#2a2a2a;font-weight:400;transform:scaleX(0.9190);transform-origin:0 0;">4</div>
<div class="t" style="left:1291.8px;top:482.91px;font-size:10.5px;color:#2a2a2a;font-weight:400;transform:scaleX(0.9190);transform-origin:0 0;">12-07-2021</div>
<div class="t" style="left:345.2px;top:507.91px;font-size:10.5px;color:#2a2a2a;font-weight:400;transform:scaleX(0.9190);transform-origin:0 0;">Jennings130 Inc</div>
<div class="t" style="left:448.1px;top:507.91px;font-size:10.5px;color:#2a2a2a;font-weight:400;transform:scaleX(0.9190);transform-origin:0 0;">Switzerland</div>
<div class="t" style="left:552.4px;top:507.91px;font-size:10.5px;color:#2a2a2a;font-weight:400;transform:scaleX(0.9190);transform-origin:0 0;">2021-12-07T07:22:05.000Z</div>
<div class="t" style="left:688.2px;top:507.91px;font-size:10.5px;color:#2a2a2a;font-weight:400;transform:scaleX(0.9190);transform-origin:0 0;">Word of mouth</div>
<div class="t" style="left:795.4px;top:507.91px;font-size:10.5px;color:#2a2a2a;font-weight:400;transform:scaleX(0.9190);transform-origin:0 0;">1000000</div>
<div class="t" style="left:905.2px;top:507.91px;font-size:10.5px;color:#2a2a2a;font-weight:400;transform:scaleX(0.9190);transform-origin:0 0;">12/07/2021</div>
<div class="t" style="left:999.6px;top:507.91px;font-size:10.5px;color:#2a2a2a;font-weight:400;transform:scaleX(0.9190);transform-origin:0 0;">12/07/21</div>
<div class="t" style="left:1159.8px;top:507.91px;font-size:10.5px;color:#2a2a2a;font-weight:400;transform:scaleX(0.9190);transform-origin:0 0;">4</div>
<div class="t" style="left:1291.8px;top:507.91px;font-size:10.5px;color:#2a2a2a;font-weight:400;transform:scaleX(0.9190);transform-origin:0 0;">12-07-2021</div>
<div class="t" style="left:345.2px;top:532.91px;font-size:10.5px;color:#2a2a2a;font-weight:400;transform:scaleX(0.9190);transform-origin:0 0;">Rodgers131 Inc</div>
<div class="t" style="left:448.1px;top:532.91px;font-size:10.5px;color:#2a2a2a;font-weight:400;transform:scaleX(0.9190);transform-origin:0 0;">Italy</div>
<div class="t" style="left:552.4px;top:532.91px;font-size:10.5px;color:#2a2a2a;font-weight:400;transform:scaleX(0.9190);transform-origin:0 0;">2021-12-07T07:22:05.000Z</div>
<div class="t" style="left:688.2px;top:532.91px;font-size:10.5px;color:#2a2a2a;font-weight:400;transform:scaleX(0.9190);transform-origin:0 0;">Trade Show</div>
<div class="t" style="left:795.4px;top:532.91px;font-size:10.5px;color:#2a2a2a;font-weight:400;transform:scaleX(0.9190);transform-origin:0 0;">1000000</div>
<div class="t" style="left:905.2px;top:532.91px;font-size:10.5px;color:#2a2a2a;font-weight:400;transform:scaleX(0.9190);transform-origin:0 0;">12/07/2021</div>
<div class="t" style="left:999.6px;top:532.91px;font-size:10.5px;color:#2a2a2a;font-weight:400;transform:scaleX(0.9190);transform-origin:0 0;">12/07/21</div>
<div class="t" style="left:1159.8px;top:532.91px;font-size:10.5px;color:#2a2a2a;font-weight:400;transform:scaleX(0.9190);transform-origin:0 0;">4</div>
<div class="t" style="left:1291.8px;top:532.91px;font-size:10.5px;color:#2a2a2a;font-weight:400;transform:scaleX(0.9190);transform-origin:0 0;">12-07-2021</div>
<div class="t" style="left:345.2px;top:557.91px;font-size:10.5px;color:#2a2a2a;font-weight:400;transform:scaleX(0.9190);transform-origin:0 0;">Cobb132 Inc</div>
<div class="t" style="left:448.1px;top:557.91px;font-size:10.5px;color:#2a2a2a;font-weight:400;transform:scaleX(0.9190);transform-origin:0 0;">Taiwan</div>
<div class="t" style="left:552.4px;top:557.91px;font-size:10.5px;color:#2a2a2a;font-weight:400;transform:scaleX(0.9190);transform-origin:0 0;">2021-12-07T07:22:05.000Z</div>
<div class="t" style="left:688.2px;top:557.91px;font-size:10.5px;color:#2a2a2a;font-weight:400;transform:scaleX(0.9190);transform-origin:0 0;">Employee Referral</div>
<div class="t" style="left:795.4px;top:557.91px;font-size:10.5px;color:#2a2a2a;font-weight:400;transform:scaleX(0.9190);transform-origin:0 0;">1000000</div>
<div class="t" style="left:905.2px;top:557.91px;font-size:10.5px;color:#2a2a2a;font-weight:400;transform:scaleX(0.9190);transform-origin:0 0;">12/07/2021</div>
<div class="t" style="left:999.6px;top:557.91px;font-size:10.5px;color:#2a2a2a;font-weight:400;transform:scaleX(0.9190);transform-origin:0 0;">12/07/21</div>
<div class="t" style="left:1159.8px;top:557.91px;font-size:10.5px;color:#2a2a2a;font-weight:400;transform:scaleX(0.9190);transform-origin:0 0;">4</div>
<div class="t" style="left:1291.8px;top:557.91px;font-size:10.5px;color:#2a2a2a;font-weight:400;transform:scaleX(0.9190);transform-origin:0 0;">12-07-2021</div>
<div class="t" style="left:345.2px;top:582.91px;font-size:10.5px;color:#2a2a2a;font-weight:400;transform:scaleX(0.9190);transform-origin:0 0;">Johnston133 Inc</div>
<div class="t" style="left:448.1px;top:582.91px;font-size:10.5px;color:#2a2a2a;font-weight:400;transform:scaleX(0.9190);transform-origin:0 0;">USA</div>
<div class="t" style="left:552.4px;top:582.91px;font-size:10.5px;color:#2a2a2a;font-weight:400;transform:scaleX(0.9190);transform-origin:0 0;">2021-12-07T07:22:05.000Z</div>
<div class="t" style="left:688.2px;top:582.91px;font-size:10.5px;color:#2a2a2a;font-weight:400;transform:scaleX(0.9190);transform-origin:0 0;">Trade Show</div>
<div class="t" style="left:795.4px;top:582.91px;font-size:10.5px;color:#2a2a2a;font-weight:400;transform:scaleX(0.9190);transform-origin:0 0;">1000000</div>
<div class="t" style="left:905.2px;top:582.91px;font-size:10.5px;color:#2a2a2a;font-weight:400;transform:scaleX(0.9190);transform-origin:0 0;">12/07/2021</div>
<div class="t" style="left:999.6px;top:582.91px;font-size:10.5px;color:#2a2a2a;font-weight:400;transform:scaleX(0.9190);transform-origin:0 0;">12/07/21</div>
<div class="t" style="left:1159.8px;top:582.91px;font-size:10.5px;color:#2a2a2a;font-weight:400;transform:scaleX(0.9190);transform-origin:0 0;">4</div>
<div class="t" style="left:1291.8px;top:582.91px;font-size:10.5px;color:#2a2a2a;font-weight:400;transform:scaleX(0.9190);transform-origin:0 0;">12-07-2021</div>
<div class="t" style="left:345.2px;top:607.91px;font-size:10.5px;color:#2a2a2a;font-weight:400;transform:scaleX(0.9190);transform-origin:0 0;">Nichols134 Inc</div>
<div class="t" style="left:448.1px;top:607.91px;font-size:10.5px;color:#2a2a2a;font-weight:400;transform:scaleX(0.9190);transform-origin:0 0;">Canada</div>
<div class="t" style="left:552.4px;top:607.91px;font-size:10.5px;color:#2a2a2a;font-weight:400;transform:scaleX(0.9190);transform-origin:0 0;">2021-12-07T07:22:05.000Z</div>
<div class="t" style="left:688.2px;top:607.91px;font-size:10.5px;color:#2a2a2a;font-weight:400;transform:scaleX(0.9190);transform-origin:0 0;">Word of mouth</div>
<div class="t" style="left:795.4px;top:607.91px;font-size:10.5px;color:#2a2a2a;font-weight:400;transform:scaleX(0.9190);transform-origin:0 0;">1000000</div>
<div class="t" style="left:905.2px;top:607.91px;font-size:10.5px;color:#2a2a2a;font-weight:400;transform:scaleX(0.9190);transform-origin:0 0;">12/07/2021</div>
<div class="t" style="left:999.6px;top:607.91px;font-size:10.5px;color:#2a2a2a;font-weight:400;transform:scaleX(0.9190);transform-origin:0 0;">12/07/21</div>
<div class="t" style="left:1159.8px;top:607.91px;font-size:10.5px;color:#2a2a2a;font-weight:400;transform:scaleX(0.9190);transform-origin:0 0;">4</div>
<div class="t" style="left:1291.8px;top:607.91px;font-size:10.5px;color:#2a2a2a;font-weight:400;transform:scaleX(0.9190);transform-origin:0 0;">12-07-2021</div>
<div class="t" style="left:345.2px;top:633.91px;font-size:10.5px;color:#2a2a2a;font-weight:400;transform:scaleX(0.9190);transform-origin:0 0;">Larson135 Inc</div>
<div class="t" style="left:448.1px;top:633.91px;font-size:10.5px;color:#2a2a2a;font-weight:400;transform:scaleX(0.9190);transform-origin:0 0;">Hong Kong</div>
<div class="t" style="left:552.4px;top:633.91px;font-size:10.5px;color:#2a2a2a;font-weight:400;transform:scaleX(0.9190);transform-origin:0 0;">2021-12-07T07:22:05.000Z</div>
<div class="t" style="left:688.2px;top:633.91px;font-size:10.5px;color:#2a2a2a;font-weight:400;transform:scaleX(0.9190);transform-origin:0 0;">Partner</div>
<div class="t" style="left:795.4px;top:633.91px;font-size:10.5px;color:#2a2a2a;font-weight:400;transform:scaleX(0.9190);transform-origin:0 0;">1000000</div>
<div class="t" style="left:905.2px;top:633.91px;font-size:10.5px;color:#2a2a2a;font-weight:400;transform:scaleX(0.9190);transform-origin:0 0;">12/07/2021</div>
<div class="t" style="left:999.6px;top:633.91px;font-size:10.5px;color:#2a2a2a;font-weight:400;transform:scaleX(0.9190);transform-origin:0 0;">12/07/21</div>
<div class="t" style="left:1159.8px;top:633.91px;font-size:10.5px;color:#2a2a2a;font-weight:400;transform:scaleX(0.9190);transform-origin:0 0;">4</div>
<div class="t" style="left:1291.8px;top:633.91px;font-size:10.5px;color:#2a2a2a;font-weight:400;transform:scaleX(0.9190);transform-origin:0 0;">12-07-2021</div>
<div class="t" style="left:345.2px;top:658.91px;font-size:10.5px;color:#2a2a2a;font-weight:400;transform:scaleX(0.9190);transform-origin:0 0;">Thompson136 Inc</div>
<div class="t" style="left:448.1px;top:658.91px;font-size:10.5px;color:#2a2a2a;font-weight:400;transform:scaleX(0.9190);transform-origin:0 0;">Thailand</div>
<div class="t" style="left:552.4px;top:658.91px;font-size:10.5px;color:#2a2a2a;font-weight:400;transform:scaleX(0.9190);transform-origin:0 0;">2021-12-07T07:22:05.000Z</div>
<div class="t" style="left:688.2px;top:658.91px;font-size:10.5px;color:#2a2a2a;font-weight:400;transform:scaleX(0.9190);transform-origin:0 0;">Web</div>
<div class="t" style="left:795.4px;top:658.91px;font-size:10.5px;color:#2a2a2a;font-weight:400;transform:scaleX(0.9190);transform-origin:0 0;">1000000</div>
<div class="t" style="left:905.2px;top:658.91px;font-size:10.5px;color:#2a2a2a;font-weight:400;transform:scaleX(0.9190);transform-origin:0 0;">12/07/2021</div>
<div class="t" style="left:999.6px;top:658.91px;font-size:10.5px;color:#2a2a2a;font-weight:400;transform:scaleX(0.9190);transform-origin:0 0;">12/07/21</div>
<div class="t" style="left:1159.8px;top:658.91px;font-size:10.5px;color:#2a2a2a;font-weight:400;transform:scaleX(0.9190);transform-origin:0 0;">4</div>
<div class="t" style="left:1291.8px;top:658.91px;font-size:10.5px;color:#2a2a2a;font-weight:400;transform:scaleX(0.9190);transform-origin:0 0;">12-07-2021</div>
<div class="t" style="left:345.2px;top:683.91px;font-size:10.5px;color:#2a2a2a;font-weight:400;transform:scaleX(0.9190);transform-origin:0 0;">Ramirez137 Inc</div>
<div class="t" style="left:448.1px;top:683.91px;font-size:10.5px;color:#2a2a2a;font-weight:400;transform:scaleX(0.9190);transform-origin:0 0;">Japan</div>
<div class="t" style="left:552.4px;top:683.91px;font-size:10.5px;color:#2a2a2a;font-weight:400;transform:scaleX(0.9190);transform-origin:0 0;">2021-12-07T07:22:05.000Z</div>
<div class="t" style="left:688.2px;top:683.91px;font-size:10.5px;color:#2a2a2a;font-weight:400;transform:scaleX(0.9190);transform-origin:0 0;">Employee Referral</div>
<div class="t" style="left:795.4px;top:683.91px;font-size:10.5px;color:#2a2a2a;font-weight:400;transform:scaleX(0.9190);transform-origin:0 0;">1000000</div>
<div class="t" style="left:905.2px;top:683.91px;font-size:10.5px;color:#2a2a2a;font-weight:400;transform:scaleX(0.9190);transform-origin:0 0;">12/07/2021</div>
<div class="t" style="left:999.6px;top:683.91px;font-size:10.5px;color:#2a2a2a;font-weight:400;transform:scaleX(0.9190);transform-origin:0 0;">12/07/21</div>
<div class="t" style="left:1159.8px;top:683.91px;font-size:10.5px;color:#2a2a2a;font-weight:400;transform:scaleX(0.9190);transform-origin:0 0;">4</div>
<div class="t" style="left:1291.8px;top:683.91px;font-size:10.5px;color:#2a2a2a;font-weight:400;transform:scaleX(0.9190);transform-origin:0 0;">12-07-2021</div>
<div class="t" style="left:345.2px;top:708.91px;font-size:10.5px;color:#2a2a2a;font-weight:400;transform:scaleX(0.9190);transform-origin:0 0;">Peters138 Inc</div>
<div class="t" style="left:448.1px;top:708.91px;font-size:10.5px;color:#2a2a2a;font-weight:400;transform:scaleX(0.9190);transform-origin:0 0;">Spain</div>
<div class="t" style="left:552.4px;top:708.91px;font-size:10.5px;color:#2a2a2a;font-weight:400;transform:scaleX(0.9190);transform-origin:0 0;">2021-12-07T07:22:05.000Z</div>
<div class="t" style="left:688.2px;top:708.91px;font-size:10.5px;color:#2a2a2a;font-weight:400;transform:scaleX(0.9190);transform-origin:0 0;">Web</div>
<div class="t" style="left:795.4px;top:708.91px;font-size:10.5px;color:#2a2a2a;font-weight:400;transform:scaleX(0.9190);transform-origin:0 0;">1000000</div>
<div class="t" style="left:905.2px;top:708.91px;font-size:10.5px;color:#2a2a2a;font-weight:400;transform:scaleX(0.9190);transform-origin:0 0;">12/07/2021</div>
<div class="t" style="left:999.6px;top:708.91px;font-size:10.5px;color:#2a2a2a;font-weight:400;transform:scaleX(0.9190);transform-origin:0 0;">12/07/21</div>
<div class="t" style="left:1159.8px;top:708.91px;font-size:10.5px;color:#2a2a2a;font-weight:400;transform:scaleX(0.9190);transform-origin:0 0;">4</div>
<div class="t" style="left:1291.8px;top:708.91px;font-size:10.5px;color:#2a2a2a;font-weight:400;transform:scaleX(0.9190);transform-origin:0 0;">12-07-2021</div>
<div class="t" style="left:345.2px;top:733.91px;font-size:10.5px;color:#2a2a2a;font-weight:400;transform:scaleX(0.9190);transform-origin:0 0;">Pope139 Inc</div>
<div class="t" style="left:448.1px;top:733.91px;font-size:10.5px;color:#2a2a2a;font-weight:400;transform:scaleX(0.9190);transform-origin:0 0;">USA</div>
<div class="t" style="left:552.4px;top:733.91px;font-size:10.5px;color:#2a2a2a;font-weight:400;transform:scaleX(0.9190);transform-origin:0 0;">2021-12-07T07:22:05.000Z</div>
<div class="t" style="left:688.2px;top:733.91px;font-size:10.5px;color:#2a2a2a;font-weight:400;transform:scaleX(0.9190);transform-origin:0 0;">Web</div>
<div class="t" style="left:795.4px;top:733.91px;font-size:10.5px;color:#2a2a2a;font-weight:400;transform:scaleX(0.9190);transform-origin:0 0;">1000000</div>
<div class="t" style="left:905.2px;top:733.91px;font-size:10.5px;color:#2a2a2a;font-weight:400;transform:scaleX(0.9190);transform-origin:0 0;">12/07/2021</div>
<div class="t" style="left:999.6px;top:733.91px;font-size:10.5px;color:#2a2a2a;font-weight:400;transform:scaleX(0.9190);transform-origin:0 0;">12/07/21</div>
<div class="t" style="left:1159.8px;top:733.91px;font-size:10.5px;color:#2a2a2a;font-weight:400;transform:scaleX(0.9190);transform-origin:0 0;">4</div>
<div class="t" style="left:1291.8px;top:733.91px;font-size:10.5px;color:#2a2a2a;font-weight:400;transform:scaleX(0.9190);transform-origin:0 0;">12-07-2021</div>
<div class="t" style="left:345.2px;top:758.91px;font-size:10.5px;color:#2a2a2a;font-weight:400;transform:scaleX(0.9190);transform-origin:0 0;">Lopez140 Inc</div>
<div class="t" style="left:448.1px;top:758.91px;font-size:10.5px;color:#2a2a2a;font-weight:400;transform:scaleX(0.9190);transform-origin:0 0;">China</div>
<div class="t" style="left:552.4px;top:758.91px;font-size:10.5px;color:#2a2a2a;font-weight:400;transform:scaleX(0.9190);transform-origin:0 0;">2021-12-07T07:22:05.000Z</div>
<div class="t" style="left:688.2px;top:758.91px;font-size:10.5px;color:#2a2a2a;font-weight:400;transform:scaleX(0.9190);transform-origin:0 0;">Trade Show</div>
<div class="t" style="left:795.4px;top:758.91px;font-size:10.5px;color:#2a2a2a;font-weight:400;transform:scaleX(0.9190);transform-origin:0 0;">1000000</div>
<div class="t" style="left:905.2px;top:758.91px;font-size:10.5px;color:#2a2a2a;font-weight:400;transform:scaleX(0.9190);transform-origin:0 0;">12/07/2021</div>
<div class="t" style="left:999.6px;top:758.91px;font-size:10.5px;color:#2a2a2a;font-weight:400;transform:scaleX(0.9190);transform-origin:0 0;">12/07/21</div>
<div class="t" style="left:1159.8px;top:758.91px;font-size:10.5px;color:#2a2a2a;font-weight:400;transform:scaleX(0.9190);transform-origin:0 0;">4</div>
<div class="t" style="left:1291.8px;top:758.91px;font-size:10.5px;color:#2a2a2a;font-weight:400;transform:scaleX(0.9190);transform-origin:0 0;">12-07-2021</div>
<div class="b" style="left:1281px;top:272px;width:128px;height:512px;border:4px solid #22b14c;box-sizing:border-box"></div>
<div class="b" style="left:1409px;top:273px;width:12px;height:509px;background:#f1f1f1;border-right:1px solid #d8dde6;border-top:1px solid #d8dde6;box-sizing:border-box"></div>
<div class="b" style="left:1409.5px;top:288.3px;width:8.6px;height:14px;background:#c1c1c1"></div>
<svg class="b" style="left:1410.5px;top:280.5px;" width="6" height="3" viewBox="0 0 6 3"><path d="M0 3h5.5L2.75 0z" fill="#a3a3a3"/></svg>
<svg class="b" style="left:1410.2px;top:772.5px;" width="6" height="4" viewBox="0 0 6 4"><path d="M0 0h5.5L2.75 3.2z" fill="#505050"/></svg>
</body></html>
